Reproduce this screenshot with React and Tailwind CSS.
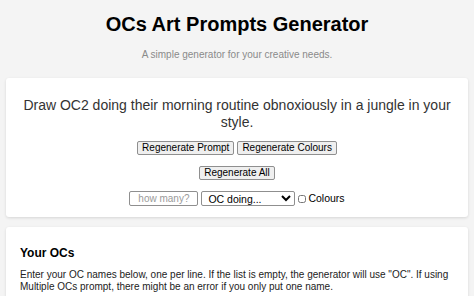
import React from 'react';

export default function App() {
	// State
	const [count, setCount] = React.useState('');
	const [mode, setMode] = React.useState('doing');
	const [colours, setColours] = React.useState(false);

	const btn =
		'bg-[#efefef] border border-[#8f8f8f] rounded-[2px] px-[4px] h-[14px] leading-[12px] text-[10px] text-black';

	return (
		<div className="min-h-screen bg-[#f4f4f4] text-black" style={{ fontFamily: '"Liberation Sans", Arial, sans-serif' }}>
			<header className="text-center pt-[12px] pb-[17px]">
				<h1 className="text-[20px] font-bold leading-[24px]">OCs Art Prompts Generator</h1>
				<p className="mt-[13px] text-[10px] text-[#8a8a8a] leading-[12px]">A simple generator for your creative needs.</p>
			</header>

			<div className="flex flex-col gap-[10px] px-[6px]">
				{/* Prompt card */}
				<section className="bg-white rounded-[3px] shadow-[0_1px_3px_rgba(0,0,0,0.12)] px-[14px] pt-[19px] pb-[10px] text-center">
					<p className="text-[14px] leading-[17px] text-[#333]">
						Draw OC2 doing their morning routine obnoxiously in a jungle in your style.
					</p>
					<div className="mt-[10px] flex justify-center gap-[3px]">
						<button className={btn}>Regenerate Prompt</button>
						<button className={btn}>Regenerate Colours</button>
					</div>
					<div className="mt-[11px] flex justify-center">
						<button className={btn}>Regenerate All</button>
					</div>
					<div className="mt-[11px] flex justify-center items-center gap-[3px] text-[10.5px]">
						<input
							value={count}
							onChange={({ target }) => setCount(target.value)}
							placeholder="how many?"
							className="w-[69px] h-[15px] border border-[#8f8f8f] rounded-[2px] text-center text-[10px] placeholder:text-[#9a9a9a]"
						/>
						<select
							value={mode}
							onChange={({ target }) => setMode(target.value)}
							className="w-[94px] h-[15px] border border-[#8f8f8f] rounded-[2px] text-[10.5px] leading-[13px] px-[2px]"
						>
							<option value="doing">OC doing...</option>
							<option value="multiple">Multiple OCs</option>
						</select>
						<label className="flex items-center gap-[2px]">
							<input type="checkbox" checked={colours} onChange={() => setColours(!colours)} className="w-[8px] h-[8px] m-0" />
							Colours
						</label>
					</div>
				</section>

				{/* OCs card */}
				<section className="bg-white rounded-[3px] shadow-[0_1px_3px_rgba(0,0,0,0.12)] px-[14px] pt-[18px] pb-[20px]">
					<h2 className="text-[12px] font-bold leading-[16px]">Your OCs</h2>
					<p className="mt-[8px] text-[10px] leading-[12px] text-[#222]">
						Enter your OC names below, one per line. If the list is empty, the generator will use "OC". If using Multiple OCs prompt, there might be an error if you only put one name.
					</p>
				</section>
			</div>
		</div>
	);
}
